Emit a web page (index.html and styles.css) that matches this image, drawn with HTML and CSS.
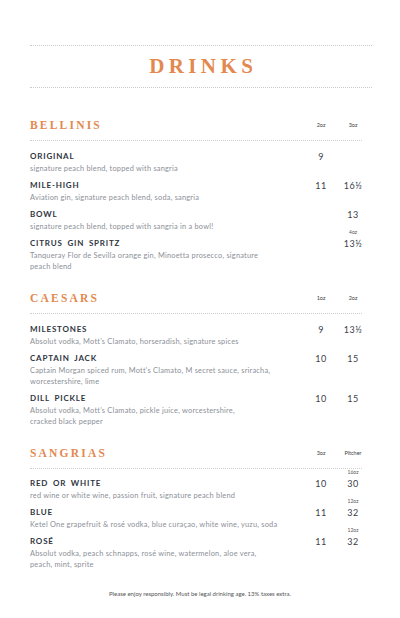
FILE: index.html
```html
<!DOCTYPE html>
<html>
<head>
<meta charset="utf-8">
<link rel="stylesheet" href="styles.css">
</head>
<body>
<div class="page">
  <header class="masthead">
    <h1 class="title">DRINKS</h1>
  </header>

  <section class="section sec-first">
    <div class="sec-rule">
      <div class="sec-head">
        <h2 class="sec-title">BELLINIS</h2>
        <span class="size">2oz</span>
        <span class="size">3oz</span>
      </div>
    </div>
    <div class="items">
      <div class="item">
        <div class="name">ORIGINAL</div>
        <div class="price">9</div>
        <div class="price"></div>
        <div class="desc">signature peach blend, topped with sangria</div>
      </div>
      <div class="item">
        <div class="name">MILE-HIGH</div>
        <div class="price">11</div>
        <div class="price">16½</div>
        <div class="desc">Aviation gin, signature peach blend, soda, sangria</div>
      </div>
      <div class="item">
        <div class="name">BOWL</div>
        <div class="price"></div>
        <div class="price">13</div>
        <div class="desc">signature peach blend, topped with sangria in a bowl!</div>
      </div>
      <div class="item">
        <div class="name">CITRUS GIN SPRITZ</div>
        <div class="price"></div>
        <div class="price"><span class="note">4oz</span>13½</div>
        <div class="desc">Tanqueray Flor de Sevilla orange gin, Minoetta prosecco, signature<br>peach blend</div>
      </div>
    </div>
  </section>

  <section class="section">
    <div class="sec-rule">
      <div class="sec-head">
        <h2 class="sec-title">CAESARS</h2>
        <span class="size">1oz</span>
        <span class="size">2oz</span>
      </div>
    </div>
    <div class="items">
      <div class="item">
        <div class="name">MILESTONES</div>
        <div class="price">9</div>
        <div class="price">13½</div>
        <div class="desc">Absolut vodka, Mott's Clamato, horseradish, signature spices</div>
      </div>
      <div class="item">
        <div class="name">CAPTAIN JACK</div>
        <div class="price">10</div>
        <div class="price">15</div>
        <div class="desc">Captain Morgan spiced rum, Mott's Clamato, M secret sauce, sriracha,<br>worcestershire, lime</div>
      </div>
      <div class="item">
        <div class="name">DILL PICKLE</div>
        <div class="price">10</div>
        <div class="price">15</div>
        <div class="desc">Absolut vodka, Mott's Clamato, pickle juice, worcestershire,<br>cracked black pepper</div>
      </div>
    </div>
  </section>

  <section class="section">
    <div class="sec-rule">
      <div class="sec-head">
        <h2 class="sec-title">SANGRIAS</h2>
        <span class="size">3oz</span>
        <span class="size">Pitcher</span>
      </div>
    </div>
    <div class="items items-last">
      <div class="item">
        <div class="name">RED OR WHITE</div>
        <div class="price">10</div>
        <div class="price"><span class="note">16oz</span>30</div>
        <div class="desc">red wine or white wine, passion fruit, signature peach blend</div>
      </div>
      <div class="item">
        <div class="name">BLUE</div>
        <div class="price">11</div>
        <div class="price"><span class="note">12oz</span>32</div>
        <div class="desc">Ketel One grapefruit &amp; rosé vodka, blue curaçao, white wine, yuzu, soda</div>
      </div>
      <div class="item">
        <div class="name">ROSÉ</div>
        <div class="price">11</div>
        <div class="price"><span class="note">12oz</span>32</div>
        <div class="desc">Absolut vodka, peach schnapps, rosé wine, watermelon, aloe vera,<br>peach, mint, sprite</div>
      </div>
    </div>
  </section>

  <footer class="footer">Please enjoy responsibly. Must be legal drinking age. 13% taxes extra.</footer>
</div>
</body>
</html>
```

FILE: styles.css
```css
* { box-sizing: border-box; margin: 0; padding: 0; }
html, body { background: #fff; }
body { width: 400px; height: 618px; overflow: hidden; font-family: Lato, "Open Sans", sans-serif; color: #2f3541; }

.page { padding: 45px 28px 0 30px; display: flex; flex-direction: column; }

.masthead {
  border-top: 1px dotted #c9c9c9;
  border-bottom: 1px dotted #c9c9c9;
  height: 43px;
  display: flex; align-items: center; justify-content: center;
}
.title {
  font-family: "Liberation Serif", serif;
  font-weight: 700;
  font-size: 21px;
  letter-spacing: 4.4px;
  margin-right: -4.4px;
  color: #e3884f;
  line-height: 1;
}

.section { margin-top: 19px; }
.sec-first { margin-top: 30px; }

.sec-rule {
  border-bottom: 1px dotted #cfcfcf;
  margin-right: 10px;
  padding-bottom: 8px;
}
.sec-head {
  display: grid;
  grid-template-columns: 1fr 32px 32px;
  align-items: center;
  margin-right: -10px;
  padding-right: 3px;
}
.sec-title {
  font-family: "Liberation Serif", serif;
  font-weight: 700;
  font-size: 11.5px;
  letter-spacing: 2.2px;
  color: #e3884f;
  line-height: 14px;
}
.size { font-size: 5.5px; color: #444; text-align: center; }

.items { display: flex; flex-direction: column; gap: 5px; padding-top: 9px; }
.items-last { padding-top: 8px; }
.item {
  display: grid;
  grid-template-columns: 1fr 32px 32px;
  padding-right: 3px;
}
.name {
  font-weight: 700;
  font-size: 8px;
  letter-spacing: 0.8px;
  word-spacing: 2px;
  line-height: 13px;
  color: #2f3541;
}
.price {
  position: relative;
  font-size: 9px;
  line-height: 13px;
  text-align: center;
  letter-spacing: 0.5px;
  color: #3a404b;
}
.note {
  position: absolute;
  left: 0; right: 0; top: -8px;
  font-size: 5px;
  line-height: 6px;
  color: #555;
  letter-spacing: 0;
}
.desc {
  grid-column: 1 / 2;
  font-size: 7.4px;
  letter-spacing: 0.22px;
  line-height: 11px;
  color: #8c9097;
}

.footer {
  margin-top: 20px;
  text-align: center;
  font-size: 6px;
  color: #555;
  padding-right: 2px;
}
```
